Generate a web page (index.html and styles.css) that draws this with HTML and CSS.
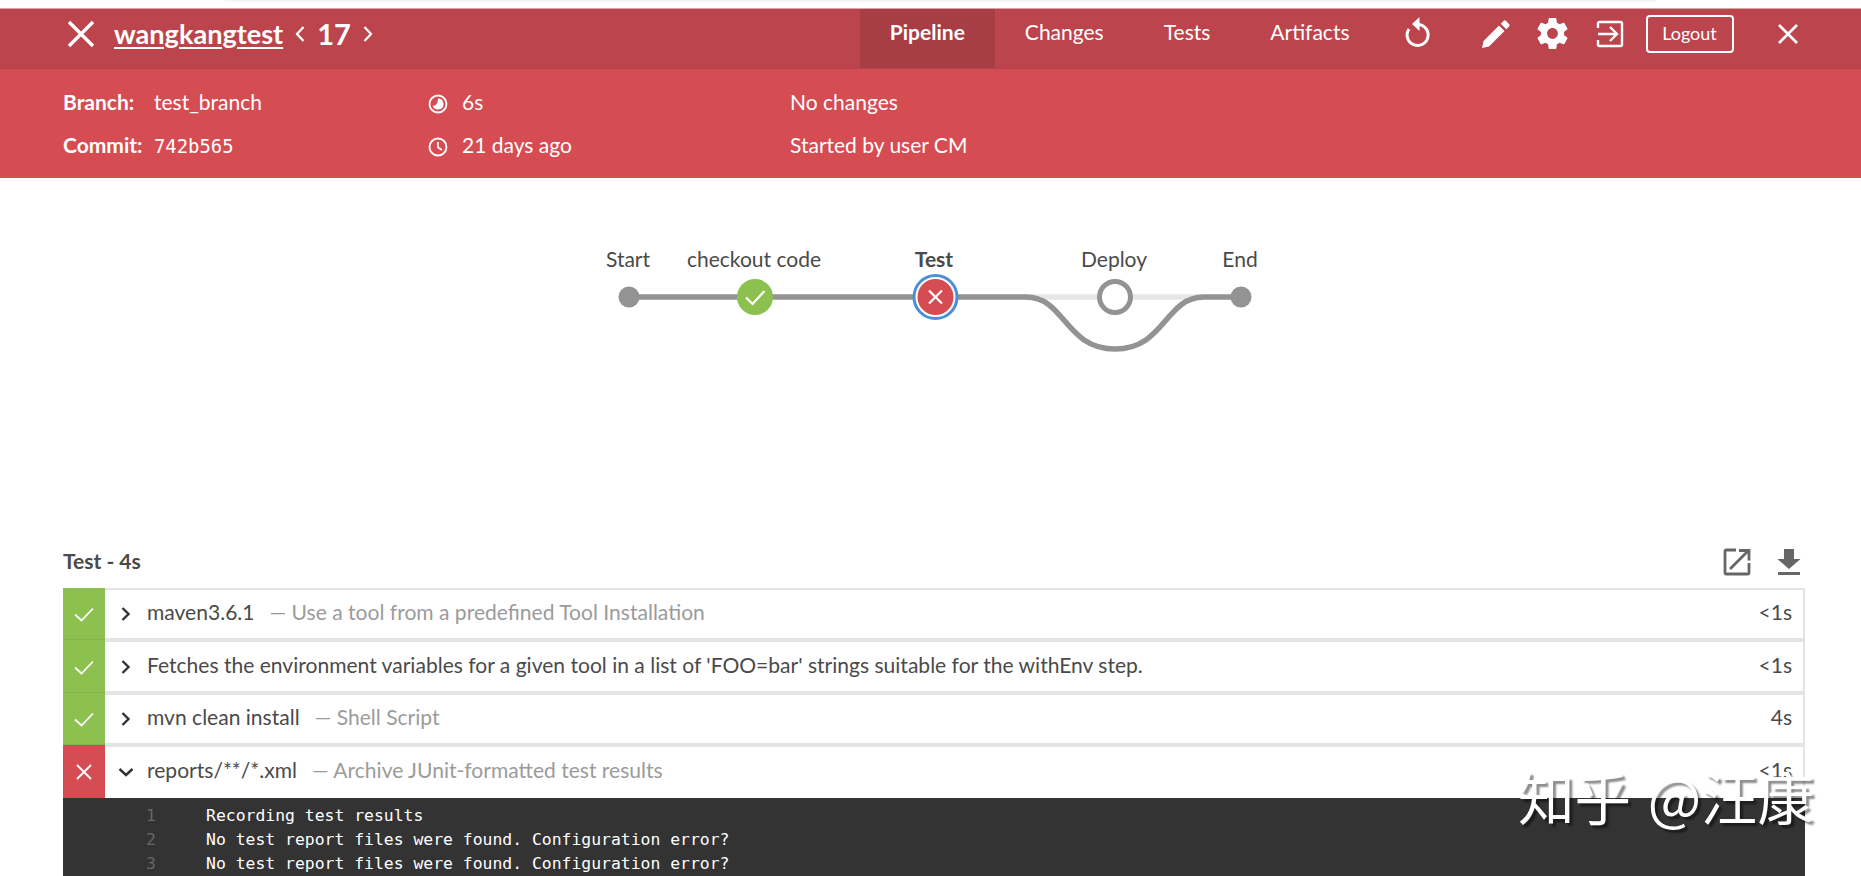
FILE: index.html
```html
<!DOCTYPE html>
<html lang="en">
<head>
<meta charset="utf-8">
<title>wangkangtest 17</title>
<link rel="stylesheet" href="styles.css">
</head>
<body>
<div class="page">
  <div class="topstrip"><div class="topstrip-bar"></div></div>
  <header class="bar">
    <svg class="bar-close" viewBox="0 0 30 30" width="30" height="30"><path d="M3 3L27 27M27 3L3 27" fill="none" stroke="#fff" stroke-width="3.4"/></svg>
    <a class="job">wangkangtest</a>
    <svg class="run-arrow" viewBox="0 0 12 20" width="12" height="20"><path d="M9.5 3L3 10l6.5 7" fill="none" stroke="#fff" stroke-width="2.2"/></svg>
    <span class="run">17</span>
    <svg class="run-arrow" viewBox="0 0 12 20" width="12" height="20"><path d="M2.5 3L9 10l-6.500 7" fill="none" stroke="#fff" stroke-width="2.2"/></svg>
    <nav class="tabs">
      <a class="tab tab-active">Pipeline</a>
      <a class="tab">Changes</a>
      <a class="tab">Tests</a>
      <a class="tab">Artifacts</a>
    </nav>
    <div class="tools">
      <svg class="tool tool-reset" viewBox="0 0 30 36" width="30" height="36"><path d="M13.500 8.500a10.500 10.500 0 1 1-8.500 4.500" fill="none" stroke="#fff" stroke-width="3"/><path d="M15.500 1L8 8l7.500 7z" fill="#fff"/></svg>
      <svg class="tool tool-pen" viewBox="0 0 30 30" width="30" height="30"><path d="M1 29l1.500-7L18 6.500l5.500 5.500L8 27.500zM19.800 4.700l2.900-2.900a1.500 1.500 0 0 1 2.100 0l3.400 3.400a1.500 1.500 0 0 1 0 2.100l-2.900 2.900z" fill="#fff"/></svg>
      <svg class="tool tool-gear" viewBox="0 0 24 24" width="37" height="37"><path d="M19.430 12.980c.04-.32.070-.64.070-.98s-.03-.66-.07-.98l2.110-1.650c.19-.15.24-.42.120-.64l-2-3.460c-.12-.22-.39-.30-.61-.22l-2.490 1c-.52-.40-1.080-.73-1.690-.98l-.38-2.650A.488.488 0 0 0 14 2h-4c-.25 0-.46.180-.49.420l-.38 2.650c-.61.250-1.170.590-1.690.980l-2.490-1c-.23-.090-.49 0-.61.220l-2 3.460c-.13.220-.07.490.12.640l2.110 1.650c-.04.320-.07.650-.07.980s.03.660.07.980l-2.110 1.650c-.19.150-.24.420-.12.640l2 3.460c.12.220.39.300.61.220l2.490-1c.52.400 1.080.730 1.690.980l.38 2.650c.03.240.24.420.49.420h4c.25 0 .46-.18.49-.42l.38-2.650c.61-.25 1.170-.59 1.690-.98l2.490 1c.23.090.49 0 .61-.22l2-3.460c.12-.22.070-.49-.12-.64l-2.110-1.650zM12 15.500c-1.930 0-3.500-1.570-3.500-3.500s1.570-3.500 3.500-3.500 3.500 1.570 3.500 3.500-1.570 3.500-3.500 3.500z" fill="#fff"/></svg>
      <svg class="tool tool-exit" viewBox="0 0 30 30" width="30" height="30"><path d="M3 9V4.500A1.500 1.500 0 0 1 4.500 3h21A1.500 1.500 0 0 1 27 4.500v21a1.500 1.500 0 0 1-1.500 1.500h-21A1.500 1.500 0 0 1 3 25.500V21M3 15h19M15 8l7 7-7 7" fill="none" stroke="#fff" stroke-width="2.400"/></svg>
      <a class="logout">Logout</a>
      <svg class="tool-close" viewBox="0 0 22 22" width="22" height="22"><path d="M2 2L20 20M20 2L2 20" fill="none" stroke="#fff" stroke-width="2.600"/></svg>
    </div>
  </header>
  <section class="info">
    <div class="info-col info-col-a">
      <div class="info-row"><b class="info-key">Branch:</b><span>test_branch</span></div>
      <div class="info-row"><b class="info-key">Commit:</b><code class="sha">742b565</code></div>
    </div>
    <div class="info-col info-col-b">
      <div class="info-row"><svg class="info-ico" viewBox="0 0 20 20" width="20" height="20"><circle cx="10" cy="10" r="8.500" fill="none" stroke="#fff" stroke-width="1.800"/><path d="M10 4.500a5.500 5.500 0 1 1-5.200 7.300C8 12 10 9 10 4.500z" fill="#fff"/></svg><span>6s</span></div>
      <div class="info-row"><svg class="info-ico" viewBox="0 0 20 20" width="20" height="20"><circle cx="10" cy="10" r="8.500" fill="none" stroke="#fff" stroke-width="1.800"/><path d="M10 5v5.500l4 2.500" fill="none" stroke="#fff" stroke-width="1.600"/></svg><span>21 days ago</span></div>
    </div>
    <div class="info-col">
      <div class="info-row">No changes</div>
      <div class="info-row">Started by user CM</div>
    </div>
  </section>
  <section class="graph">
    <svg class="graph-svg" viewBox="0 178 1861 342" width="1861" height="342">
      <path class="line-faint" d="M1026 297H1204"/>
      <path class="line" d="M629 297H1026C1065 297 1065 349 1115 349C1165 349 1165 297 1204 297H1241"/>
      <circle class="node-end" cx="629" cy="297" r="10.500"/>
      <circle class="node-end" cx="1241" cy="297" r="10.500"/>
      <circle class="node-ok" cx="755" cy="297" r="18"/>
      <path class="mark" d="M746 297.500l6.500 6.500 12-13"/>
      <circle class="node-ring" cx="935.500" cy="297" r="21.500"/>
      <circle class="node-fail" cx="935.500" cy="297" r="18"/>
      <path class="mark" d="M929 290.500l13 13M942 290.500l-13 13"/>
      <circle class="node-todo" cx="1115" cy="297" r="15.500"/>
      <text class="glabel" x="628" y="267">Start</text>
      <text class="glabel" x="754" y="267">checkout code</text>
      <text class="glabel glabel-sel" x="934" y="267">Test</text>
      <text class="glabel" x="1114" y="267">Deploy</text>
      <text class="glabel" x="1240" y="267">End</text>
    </svg>
  </section>
  <section class="steps">
    <div class="steps-head">
      <h3 class="steps-title">Test - 4s</h3>
      <div class="steps-tools">
        <svg viewBox="0 0 28 28" width="28" height="28"><path d="M13 2H3.500A1.500 1.500 0 0 0 2 3.500v21A1.500 1.500 0 0 0 3.500 26h21a1.500 1.500 0 0 0 1.500-1.500V15M7 21L25 3M16 2.500h10v10" fill="none" stroke="#666" stroke-width="2.800"/></svg>
        <svg viewBox="0 0 24 28" width="24" height="28"><path d="M7 1h10v10h6.500L12 21 .5 11H7zM1 24h22v3H1z" fill="#666"/></svg>
      </div>
    </div>
    <div class="row">
      <div class="status status-ok"><svg viewBox="0 0 20 20" width="20" height="20"><path d="M1 10.500l6.500 6L19 4.500" class="status-mark"/></svg></div>
      <svg class="chev" viewBox="0 0 14 14" width="14" height="14"><path d="M3.500 1L9.500 7l-6 6" class="chev-path"/></svg>
      <span class="step-name">maven3.6.1</span><span class="step-desc">— Use a tool from a predefined Tool Installation</span>
      <span class="step-time">&lt;1s</span>
    </div>
    <div class="row row-mid">
      <div class="status status-ok"><svg viewBox="0 0 20 20" width="20" height="20"><path d="M1 10.500l6.500 6L19 4.500" class="status-mark"/></svg></div>
      <svg class="chev" viewBox="0 0 14 14" width="14" height="14"><path d="M3.500 1L9.500 7l-6 6" class="chev-path"/></svg>
      <span class="step-name">Fetches the environment variables for a given tool in a list of 'FOO=bar' strings suitable for the withEnv step.</span>
      <span class="step-time">&lt;1s</span>
    </div>
    <div class="row row-mid">
      <div class="status status-ok"><svg viewBox="0 0 20 20" width="20" height="20"><path d="M1 10.500l6.500 6L19 4.500" class="status-mark"/></svg></div>
      <svg class="chev" viewBox="0 0 14 14" width="14" height="14"><path d="M3.500 1L9.500 7l-6 6" class="chev-path"/></svg>
      <span class="step-name">mvn clean install</span><span class="step-desc">— Shell Script</span>
      <span class="step-time">4s</span>
    </div>
    <div class="row row-open">
      <div class="status status-fail"><svg viewBox="0 0 20 20" width="20" height="20"><path d="M3 3l14 14M17 3L3 17" class="status-mark"/></svg></div>
      <svg class="chev" viewBox="0 0 14 14" width="14" height="14"><path d="M.5 4L7 10l6.500-6" class="chev-path"/></svg>
      <span class="step-name">reports/**/*.xml</span><span class="step-desc">— Archive JUnit-formatted test results</span>
      <span class="step-time">&lt;1s</span>
    </div>
    <div class="log">
      <div class="log-line"><span class="log-num">1</span><span>Recording test results</span></div>
      <div class="log-line"><span class="log-num">2</span><span>No test report files were found. Configuration error?</span></div>
      <div class="log-line"><span class="log-num">3</span><span>No test report files were found. Configuration error?</span></div>
    </div>
  </section>
  <div class="watermark">知乎 @汪康</div>
</div>
</body>
</html>
```
FILE: styles.css
```css
* { box-sizing: border-box; }
html, body { margin: 0; padding: 0; background: #fff; }
body { font-family: Lato, "Open Sans", sans-serif; color: #4a4a4a; }
.page { position: relative; width: 1861px; height: 876px; overflow: hidden; }

.topstrip { height: 9px; background: #fff; border-bottom: 1px solid #dba5a8; }
.topstrip-bar { height: 2px; margin: 0 205px 0 225px; background: #f3f7f7; }

.bar { display: flex; align-items: center; height: 60px; padding: 0 0 10px 66px; background: #bc444d; border-bottom: 1px solid #b04049; color: #fff; }
.bar-close { margin-right: 18px; }
.job { font-size: 27.100px; font-weight: 700; text-decoration: underline; text-underline-offset: 3px; margin-right: 11px; }
.run { font-size: 29px; font-weight: 700; margin: 0 11px; }
.run-arrow { flex: none; }
.tabs { display: flex; align-self: stretch; margin: 0 0 -10px 486px; }
.tab { display: flex; align-items: center; padding: 0 30px 15px; font-size: 21px; }
.tab-active { font-weight: 700; background: #a73d45; }
.tools { display: flex; align-items: center; margin-left: 24px; }
.tool-reset { margin-right: 47px; }
.tool-pen { margin-right: 23px; }
.tool-gear { margin-right: 24px; }
.tool-exit { margin-right: 21px; }
.logout { display: flex; align-items: center; justify-content: center; width: 88px; height: 38px; border: 2px solid #fff; border-radius: 4px; font-size: 18px; padding-bottom: 2px; margin-right: 43px; }

.info { display: flex; height: 109px; padding: 19.500px 0 0 63px; background: #d54c53; color: #fff; font-size: 21px; }
.info-col { display: flex; flex-direction: column; gap: 13px; }
.info-col-a { width: 365px; }
.info-col-b { width: 362px; }
.info-row { display: flex; align-items: baseline; height: 30px; }
.info-key { width: 91px; font-weight: 700; }
.sha { font-family: "DejaVu Sans Mono", monospace; font-size: 18.900px; }
.info-ico { margin-right: 14px; align-self: center; }

.graph { height: 342px; }
.graph-svg { display: block; }
.line { fill: none; stroke: #949393; stroke-width: 5.500; }
.line-faint { fill: none; stroke: #e6e6e6; stroke-width: 5.500; }
.node-end { fill: #949393; }
.node-ok { fill: #8cc04f; }
.node-fail { fill: #d54c53; }
.node-ring { fill: #fff; stroke: #4a90d9; stroke-width: 3; }
.node-todo { fill: #fff; stroke: #949393; stroke-width: 5; }
.mark { fill: none; stroke: #fff; stroke-width: 2.200; }
.glabel { font-family: Lato, sans-serif; font-size: 21px; fill: #4a4a4a; text-anchor: middle; }
.glabel-sel { font-weight: 700; }

.steps { display: flex; flex-direction: column; padding: 0 56px 0 63px; }
.steps-head { display: flex; align-items: center; justify-content: space-between; height: 68px; padding-top: 12px; padding-right: 4px; }
.steps-title { margin: 0; font-size: 21px; font-weight: 700; color: #4a4a4a; }
.steps-tools { display: flex; align-items: center; gap: 26px; margin-top: 3px; }

.row { display: flex; align-items: center; height: 52.400px; background: #fff; border: 2px solid #e4e4e4; border-width: 2px 2px 2px 0; padding-right: 11px; font-size: 21.050px; }
.row-open { border-bottom: 0; }
.status { display: flex; align-items: center; justify-content: center; flex: none; width: 42px; align-self: stretch; margin: -2px 0; box-shadow: inset 0 -1px 0 rgba(0,0,0,.06); }
.status-ok { background: #8cc04f; }
.status-fail { background: #d54c53; }
.status-mark { fill: none; stroke: #fff; stroke-width: 1.800; }
.chev { flex: none; margin: 0 14px; overflow: visible; }
.chev-path { fill: none; stroke: #333; stroke-width: 2.400; }
.step-name { color: #4a4a4a; white-space: nowrap; margin-bottom: 6px; }
.step-desc { margin: 0 0 6px 15px; color: #9b9b9b; white-space: nowrap; }
.step-time { margin: 0 0 6px auto; color: #4a4a4a; }
.row-mid .step-name { margin-bottom: 4px; }
.row-mid .step-desc { margin-bottom: 4px; }
.row-mid .step-time { margin-bottom: 4px; }

.log { background: #333; color: #fff; font-family: "DejaVu Sans Mono", monospace; font-size: 16.420px; line-height: 24px; padding: 6px 0 0 0; height: 80px; }
.log-line { display: flex; white-space: pre; }
.log-num { width: 143px; padding-left: 83px; color: #666; flex: none; }

.watermark { position: absolute; left: 1518px; top: 761px; font-family: "Noto Sans CJK SC", sans-serif; font-size: 56.500px; font-weight: 400; word-spacing: 4px; line-height: 68px; color: #fff; text-shadow: 3px 3px 2px rgba(0,0,0,.45); white-space: nowrap; }
```
